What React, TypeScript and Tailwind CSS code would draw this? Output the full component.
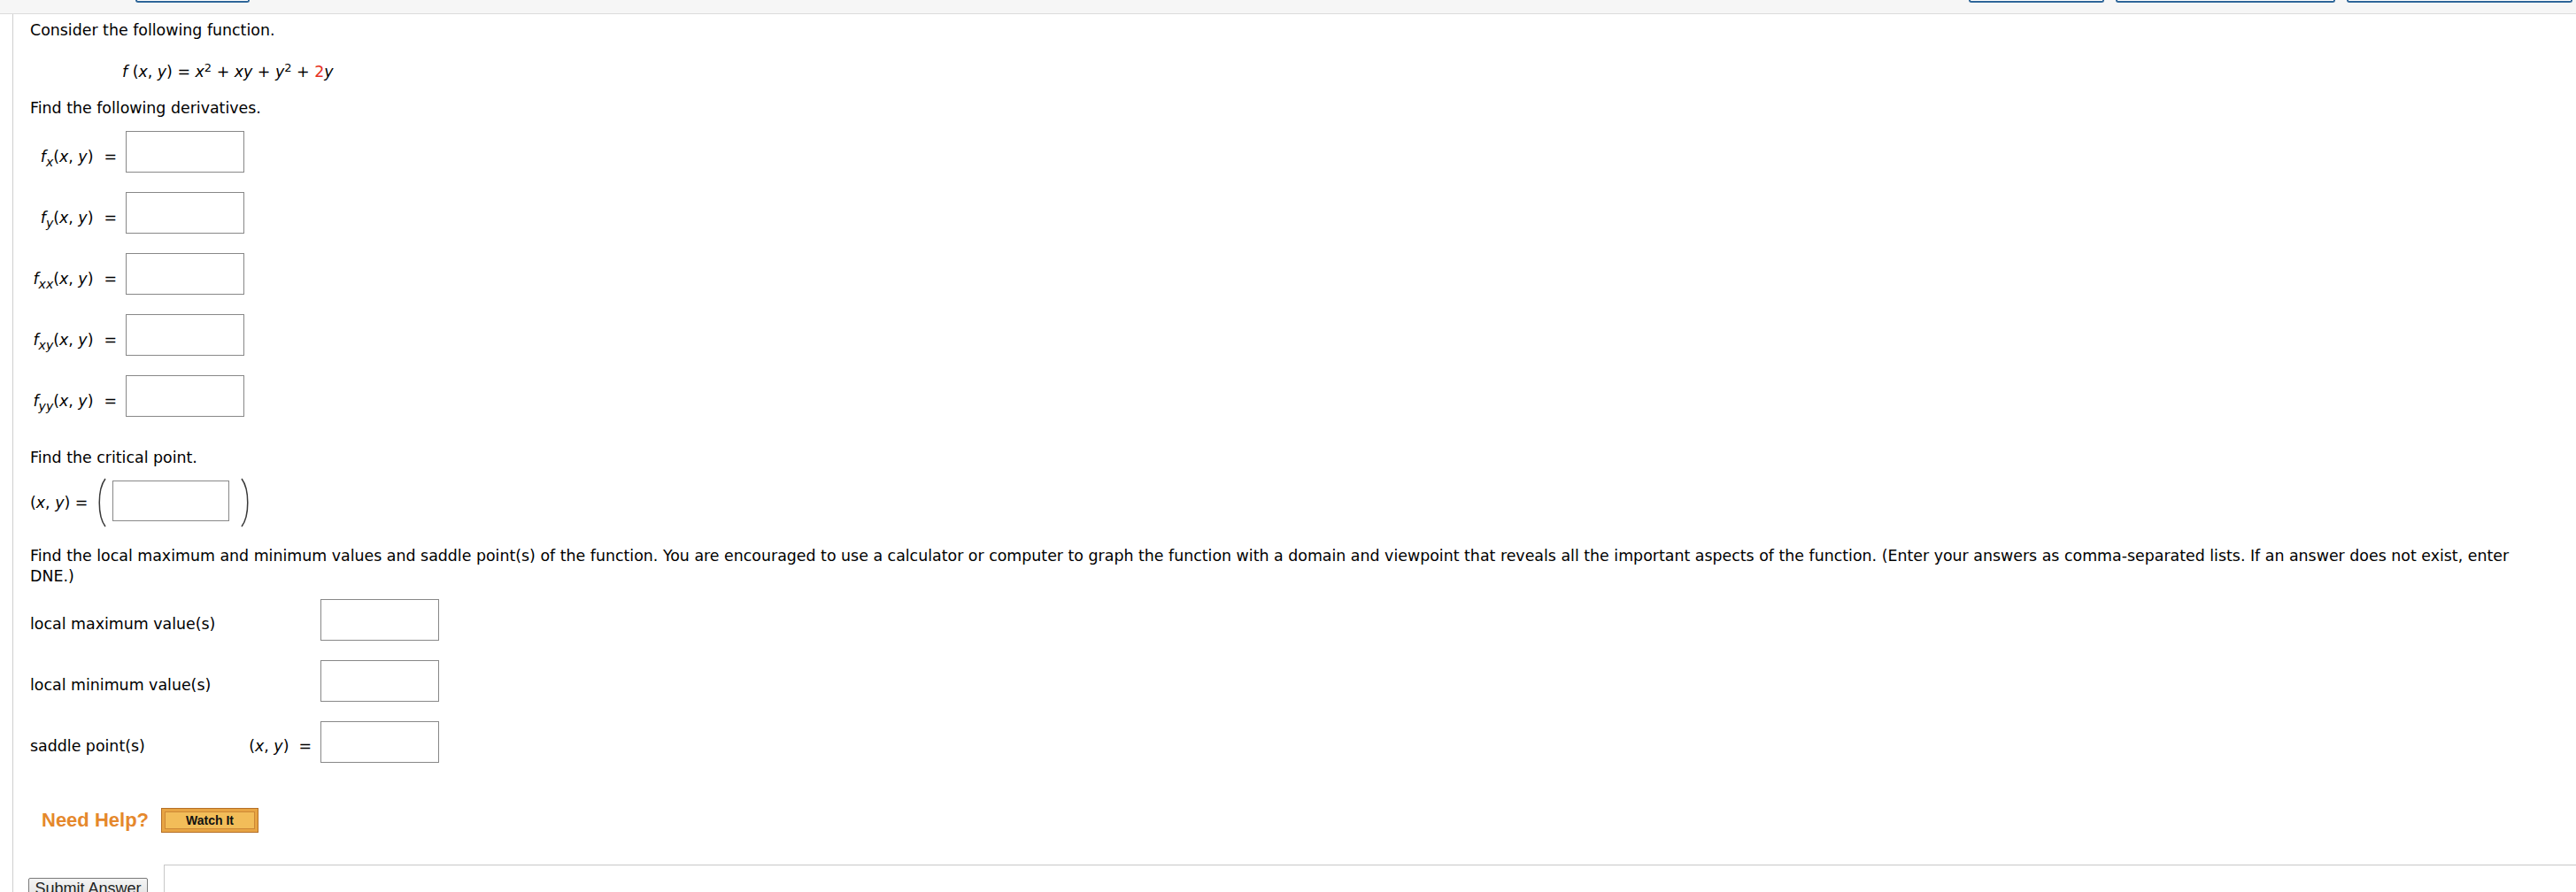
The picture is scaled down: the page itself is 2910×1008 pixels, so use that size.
import React from 'react';

const Sub = ({ children }: { children: React.ReactNode }) => (
  <span className="relative top-[5px] text-[14px] italic">{children}</span>
);

const AnswerBox = () => <div className="w-[134px] h-[47px] border border-[#888] bg-white" />;

const XY = () => (
  <>
    (<i>x</i>, <i>y</i>)
  </>
);

function DerivRow({ children }: { children: React.ReactNode }) {
  return (
    <div className="flex items-start">
      <div className="w-[108px] mt-[19px] flex justify-end whitespace-nowrap leading-[20px]">
        <span>{children}</span>
        <span className="ml-[12px] mr-[10px]">=</span>
      </div>
      <AnswerBox />
    </div>
  );
}

function ValueRow({ label, xy = false }: { label: string; xy?: boolean }) {
  return (
    <div className="flex items-start">
      <div className="w-[328px] mt-[18px] flex justify-between whitespace-nowrap leading-[20px]">
        <span>{label}</span>
        {xy && (
          <span>
            <XY />
            <span className="ml-[11px] mr-[10px]">=</span>
          </span>
        )}
      </div>
      <AnswerBox />
    </div>
  );
}

const Paren = ({ right = false }: { right?: boolean }) => (
  <svg width="14" height="56" viewBox="0 0 14 56" className="shrink-0">
    <path
      d={right ? 'M2 1 C11 13 11 43 2 55' : 'M12 1 C3 13 3 43 12 55'}
      fill="none"
      stroke="#3a3a3a"
      strokeWidth="1.5"
    />
  </svg>
);

export default function App() {
  return (
    <div className="w-[2910px] h-[1008px] overflow-hidden bg-white text-black font-['DejaVu_Sans',sans-serif] text-[17.4px]">
      {/* top toolbar, buttons cut off */}
      <div className="h-[16px] bg-[#f6f6f6] border-b border-[#dcdcdc] flex items-start pl-[153px] pr-[4px]">
        <div className="w-[129px] h-[3px] border-2 border-t-0 border-[#2e6699] rounded-b-[4px] bg-white" />
        <div className="ml-auto w-[153px] h-[3px] border-2 border-t-0 border-[#2e6699] rounded-b-[4px] bg-white" />
        <div className="ml-[13px] w-[248px] h-[3px] border-2 border-t-0 border-[#2e6699] rounded-b-[4px] bg-white" />
        <div className="ml-[13px] w-[255px] h-[3px] border-2 border-t-0 border-[#2e6699] rounded-b-[4px] bg-white" />
      </div>

      <div className="ml-[14px] h-[992px] border-l border-[#cfcfcf] pl-[19px]">
        <p className="pt-[8px] leading-[20px]">Consider the following function.</p>

        <p className="mt-[27px] ml-[104px] leading-[20px] whitespace-nowrap">
          <i>f</i> (<i>x</i>, <i>y</i>) = <i>x</i>
          <sup className="text-[13px]">2</sup> + <i>xy</i> + <i>y</i>
          <sup className="text-[13px]">2</sup> + <span className="text-[#e5321f]">2</span>
          <i>y</i>
        </p>

        <p className="mt-[21px] leading-[20px]">Find the following derivatives.</p>

        <div className="mt-[16px] flex flex-col gap-[22px]">
          <DerivRow>
            <i>f</i>
            <Sub>x</Sub>
            <XY />
          </DerivRow>
          <DerivRow>
            <i>f</i>
            <Sub>y</Sub>
            <XY />
          </DerivRow>
          <DerivRow>
            <i>f</i>
            <Sub>xx</Sub>
            <XY />
          </DerivRow>
          <DerivRow>
            <i>f</i>
            <Sub>xy</Sub>
            <XY />
          </DerivRow>
          <DerivRow>
            <i>f</i>
            <Sub>yy</Sub>
            <XY />
          </DerivRow>
        </div>

        <p className="mt-[36px] leading-[20px]">Find the critical point.</p>

        <div className="mt-[13px] flex items-start">
          <div className="w-[73px] mt-[18px] leading-[20px] whitespace-nowrap">
            <XY /> =
          </div>
          <Paren />
          <div className="ml-[6px] mt-[3px] w-[132px] h-[46px] border border-[#888]" />
          <div className="ml-[12px]">
            <Paren right />
          </div>
        </div>

        <p className="mt-[21px] leading-[23px] whitespace-nowrap">
          Find the local maximum and minimum values and saddle point(s) of the function. You are encouraged to use a
          calculator or computer to graph the function with a domain and viewpoint that reveals all the important aspects
          of the function. (Enter your answers as comma-separated lists. If an answer does not exist, enter
          <br />
          DNE.)
        </p>

        <div className="mt-[14px] flex flex-col gap-[22px]">
          <ValueRow label="local maximum value(s)" />
          <ValueRow label="local minimum value(s)" />
          <ValueRow label="saddle point(s)" xy />
        </div>

        <div className="mt-[51px] flex items-center">
          <span className="ml-[13px] font-['Liberation_Sans',Arial,sans-serif] font-bold text-[22px] leading-[28px] text-[#e5882c]">
            Need Help?
          </span>
          <div className="ml-[14px] w-[110px] h-[28px] border border-[#b56f26] bg-[#e7a443] p-[3px]">
            <div className="h-full border border-[#cd8836] bg-[#f2bd59] flex items-center justify-center font-['Liberation_Sans',Arial,sans-serif] font-bold text-[14px] leading-none text-[#111]">
              Watch It
            </div>
          </div>
        </div>

        <div className="mt-[36px] flex items-start">
          <button className="-ml-[2px] mt-[15px] w-[135px] border border-[#7a7a7a] rounded-[2px] bg-gradient-to-b from-[#f4f4f4] to-[#dedede] font-['Liberation_Sans',Arial,sans-serif] text-[18px] leading-[18px] text-[#222] pt-[2px] pb-[6px]">
            Submit Answer
          </button>
          <div className="ml-[18px] flex-1 h-[60px] border border-[#c8c8c8] border-r-0" />
        </div>
      </div>
    </div>
  );
}
